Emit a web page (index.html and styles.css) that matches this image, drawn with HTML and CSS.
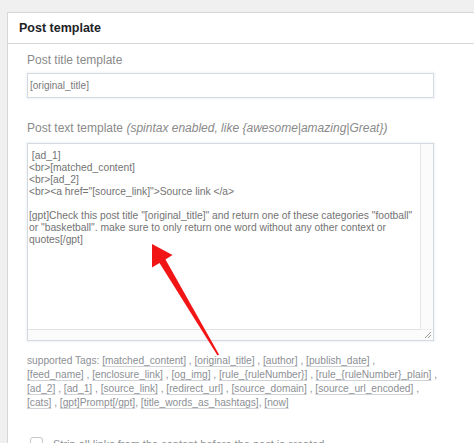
FILE: index.html
```html
<!DOCTYPE html>
<html>
<head>
<meta charset="utf-8">
<link rel="stylesheet" href="styles.css">
</head>
<body>
<div class="page">
  <div class="panel">
    <div class="panel-head">Post template</div>
    <div class="panel-body">
      <div class="field-label">Post title template</div>
      <div class="input">[original_title]</div>

      <div class="field-label label-2">Post text template <em>(spintax enabled, like {awesome|amazing|Great})</em></div>
      <div class="textarea">
        <div class="ta-content"> [ad_1]
&lt;br&gt;[matched_content]
&lt;br&gt;[ad_2]
&lt;br&gt;&lt;a href="[source_link]"&gt;Source link &lt;/a&gt;

[gpt]Check this post title "[original_title]" and return one of these categories "football"
or "basketball". make sure to only return one word without any other context or
quotes[/gpt]</div>
        <div class="ta-vscroll"></div>
        <div class="ta-hscroll"></div>
        <div class="ta-corner">
          <svg width="8" height="8" viewBox="0 0 8 8"><path d="M7 1 L1 7 M7 4 L4 7" stroke="#9a9a9a" stroke-width="1" fill="none"/></svg>
        </div>
      </div>

      <div class="tags">
        supported Tags: <span class="tag">[matched_content]</span> , <span class="tag">[original_title]</span> , <span class="tag">[author]</span> , <span class="tag">[publish_date]</span> ,<br>
        <span class="tag">[feed_name]</span> , <span class="tag">[enclosure_link]</span> , <span class="tag">[og_img]</span> , <span class="tag">[rule_{ruleNumber}]</span> , <span class="tag">[rule_{ruleNumber}_plain]</span> ,<br>
        <span class="tag">[ad_2]</span> , <span class="tag">[ad_1]</span> , <span class="tag">[source_link]</span> , <span class="tag">[redirect_url]</span> , <span class="tag">[source_domain]</span> , <span class="tag">[source_url_encoded]</span> ,<br>
        <span class="tag">[cats]</span> , <span class="tag">[gpt]Prompt[/gpt]</span>, <span class="tag">[title_words_as_hashtags]</span>, <span class="tag">[now]</span>
      </div>

      <div class="check-row">
        <span class="checkbox"></span>
        <span class="check-label">Strip all links from the content before the post is created</span>
      </div>
    </div>
  </div>

  <svg class="arrow" width="474" height="443" viewBox="0 0 474 443">
    <polygon points="152,244 172.5,255 165.5,259.5 219,354.5 217.5,355.5 159.5,263 152,267.5" fill="#f21516"/>
  </svg>
</div>
</body>
</html>
```

FILE: styles.css
```css
html, body {
  margin: 0;
  padding: 0;
}
body {
  background: #f0f0f1;
  font-family: "Liberation Sans", Arial, sans-serif;
  width: 474px;
  height: 443px;
  overflow: hidden;
}
.page {
  position: relative;
  width: 474px;
  height: 443px;
  overflow: hidden;
  padding-top: 12px;
  box-sizing: border-box;
}
.panel {
  margin-left: 7px;
  width: 520px;
  background: #fff;
  border: 1px solid #d6d7d9;
  border-right: none;
  height: 460px;
}
.panel-head {
  height: 30px;
  line-height: 30px;
  padding-left: 11px;
  font-size: 12.5px;
  font-weight: bold;
  color: #1d2327;
  border-bottom: 1px solid #d6d7d9;
}
.panel-body {
  padding-left: 19px;
  padding-top: 8px;
  width: 407px;
}
.field-label {
  font-size: 12px;
  line-height: 16px;
  color: #8a8a8a;
}
.field-label em {
  font-style: italic;
  color: #8a8a8a;
}
.label-2 {
  margin-top: 22px;
}
.input {
  margin-top: 5px;
  height: 25px;
  box-sizing: border-box;
  border: 1px solid #d4dae0;
  box-shadow: 0 0 2px 1px rgba(120, 160, 200, 0.12);
  padding-left: 2px;
  font-size: 10px;
  line-height: 23px;
  color: #7a7a7a;
  background: #fff;
}
.textarea {
  margin-top: 7px;
  height: 198px;
  box-sizing: border-box;
  border: 1px solid #d4dae0;
  box-shadow: 0 0 2px 1px rgba(120, 160, 200, 0.12);
  display: grid;
  grid-template-columns: 1fr 13px;
  grid-template-rows: 1fr 11px;
  background: #fff;
}
.ta-content {
  white-space: pre;
  overflow: hidden;
  font-size: 10.3px;
  line-height: 12px;
  color: #737373;
  padding: 6px 0 0 1px;
}
.ta-vscroll {
  border-left: 1px solid #e6e6e6;
  background: #fbfbfb;
}
.ta-hscroll {
  border-top: 1px solid #e2e2e2;
  background: #fbfbfb;
}
.ta-corner {
  background: #fbfbfb;
  border-top: 1px solid #ececec;
  display: flex;
  align-items: flex-end;
  justify-content: flex-end;
}
.ta-corner svg {
  display: block;
  margin: 0 1px 1px 0;
}
.tags {
  margin-top: 13px;
  font-size: 10.2px;
  line-height: 14px;
  color: #8c8f94;
  white-space: nowrap;
}
.tag {
  text-decoration: underline;
  text-decoration-color: #cfd2d6;
  text-underline-offset: 2px;
}
.check-row {
  margin-top: 27px;
  display: flex;
  align-items: center;
  gap: 10px;
  padding-left: 3px;
}
.checkbox {
  width: 11px;
  height: 11px;
  border: 1px solid #c4c6c9;
  border-radius: 3px;
  background: #fff;
}
.check-label {
  font-size: 11px;
  color: #8c8f94;
}
.arrow {
  position: absolute;
  left: 0;
  top: 0;
  pointer-events: none;
}
```
